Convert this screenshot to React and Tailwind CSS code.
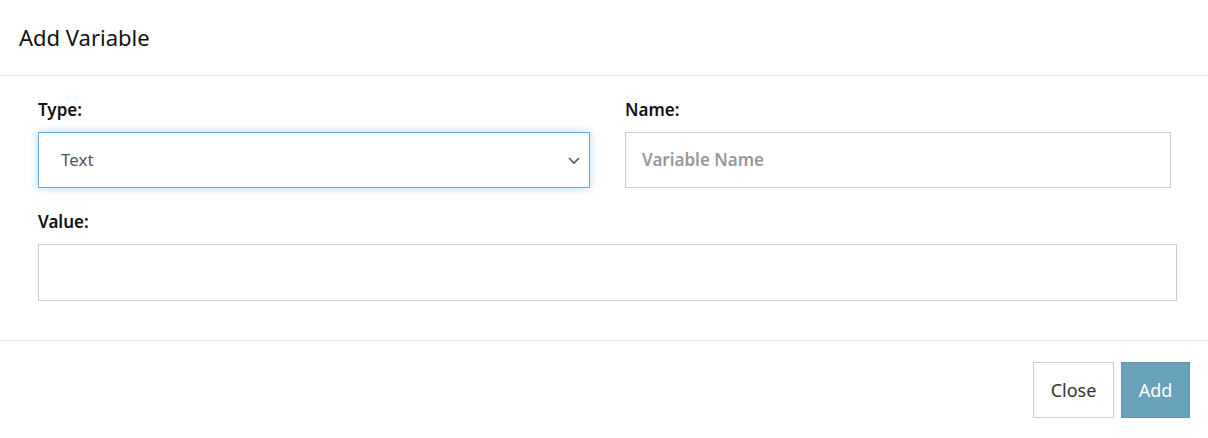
export default function App() {
  return (
    <div className="w-[1208px] h-[438px] bg-white font-['Lato',sans-serif] text-[#111]">
      <div className="h-[76px] border-b border-[#e5e5e5] pl-[19px] pt-[22px]">
        <h1 className="text-[22px] leading-[30px] font-normal">Add Variable</h1>
      </div>
      <div className="pl-[38px] pr-[32px] pt-[22px] h-[265px] border-b border-[#e5e5e5]">
        <div className="flex gap-[35px]">
          <div className="w-[552px]">
            <div className="text-[17px] font-semibold leading-[24px] h-[34px]">Type:</div>
            <div className="h-[56px] border border-[#66afe9] shadow-[0_0_8px_rgba(102,175,233,0.5)] flex items-center justify-between pl-[22px] pr-[8px] text-[17px] text-[#555]">
              <span>Text</span>
              <svg width="14" height="14" viewBox="0 0 14 14" fill="none" stroke="#555" strokeWidth="1.6"><path d="M2 5l5 5 5-5" /></svg>
            </div>
          </div>
          <div className="w-[546px]">
            <div className="text-[17px] font-semibold leading-[24px] h-[34px]">Name:</div>
            <div className="h-[56px] border border-[#ccc] flex items-center pl-[16px] text-[17px] font-semibold text-[#999]">Variable Name</div>
          </div>
        </div>
        <div className="text-[17px] font-semibold leading-[24px] mt-[22px] h-[34px]">Value:</div>
        <div className="h-[57px] w-[1139px] border border-[#ccc]"></div>
      </div>
      <div className="flex justify-end gap-[7px] pr-[18px] pt-[21px]">
        <button className="w-[81px] h-[56px] border border-[#ccc] bg-white text-[18px] text-[#333]">Close</button>
        <button className="w-[69px] h-[56px] bg-[#6aa1bb] border border-[#5f97b1] text-[18px] text-white">Add</button>
      </div>
    </div>
  );
}
